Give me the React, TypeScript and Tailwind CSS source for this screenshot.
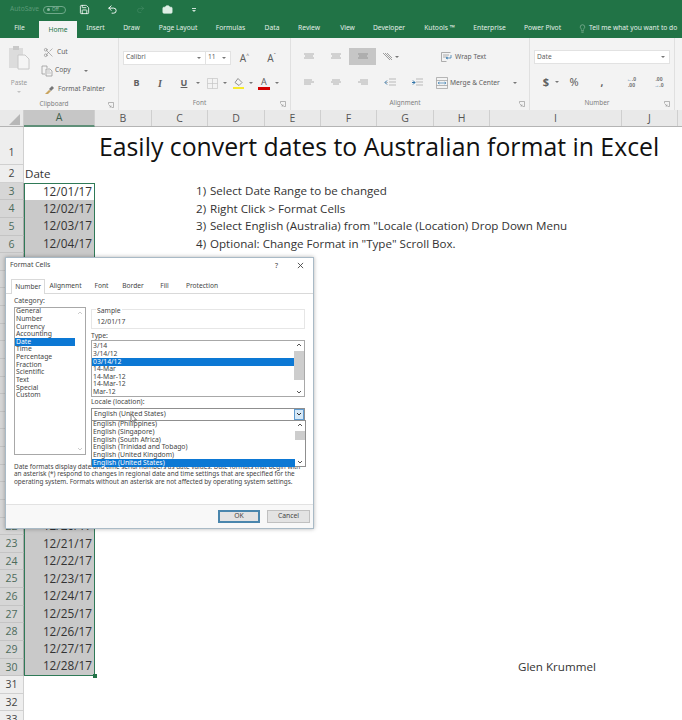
import { Camera, Lightbulb, Redo2, Save, Scissors, Undo2 } from "lucide-react";

const SANS = "font-['Open_Sans',sans-serif]";
const UI = "font-['Noto_Sans',sans-serif]";

const TABS = [
  { label: "File", w: "w-[39px]" },
  { label: "Home", w: "w-[38px]" },
  { label: "Insert", w: "w-[37px]" },
  { label: "Draw", w: "w-[35px]" },
  { label: "Page Layout", w: "w-[58px]" },
  { label: "Formulas", w: "w-[47px]" },
  { label: "Data", w: "w-[36px]" },
  { label: "Review", w: "w-[38px]" },
  { label: "View", w: "w-[39px]" },
  { label: "Developer", w: "w-[44px]" },
  { label: "Kutools ™", w: "w-[57px]" },
  { label: "Enterprise", w: "w-[43px]" },
  { label: "Power Pivot", w: "w-[63px]" },
];

const COLUMNS = [
  { label: "A", w: "w-[71px]" },
  { label: "B", w: "w-[57px]" },
  { label: "C", w: "w-[56px]" },
  { label: "D", w: "w-[57px]" },
  { label: "E", w: "w-[56px]" },
  { label: "F", w: "w-[56px]" },
  { label: "G", w: "w-[57px]" },
  { label: "H", w: "w-[56px]" },
  { label: "I", w: "w-[132px]" },
  { label: "J", w: "w-[56px]" },
];

const STEPS: Record<number, [string, string]> = {
  3: ["1)", "Select Date Range to be changed"],
  4: ["2)", "Right Click > Format Cells"],
  5: ["3)", 'Select English (Australia) from "Locale (Location) Drop Down Menu'],
  6: ["4)", 'Optional: Change Format in "Type" Scroll Box.'],
};

const CATEGORIES = ["General", "Number", "Currency", "Accounting", "Date", "Time", "Percentage", "Fraction", "Scientific", "Text", "Special", "Custom"];
const TYPES = ["3/14", "3/14/12", "03/14/12", "14-Mar", "14-Mar-12", "14-Mar-12", "Mar-12"];
const LOCALES = ["English (Philippines)", "English (Singapore)", "English (South Africa)", "English (Trinidad and Tobago)", "English (United Kingdom)", "English (United States)"];
const DIALOG_TABS = [
  { label: "Number", w: "w-[34px]" },
  { label: "Alignment", w: "w-[41px]" },
  { label: "Font", w: "w-[31px]" },
  { label: "Border", w: "w-[32px]" },
  { label: "Fill", w: "w-[31px]" },
  { label: "Protection", w: "w-[44px]" },
];

function Chev({ className = "" }: { className?: string }) {
  return <span className={`block h-0 w-0 border-x-[2px] border-t-[2px] border-x-transparent border-t-[#777] ${className}`} />;
}

function Launcher() {
  return (
    <svg width="6" height="6" viewBox="0 0 6 6" className="shrink-0">
      <path d="M.5 2.500V.5h5v5h-2M1 3l2 2M3 3.500V5H1.500" fill="none" stroke="#999" strokeWidth=".7" />
    </svg>
  );
}

function Lines({ rows, color = "#a0a0a0" }: { rows: [number, number][]; color?: string }) {
  return (
    <svg width="12" height="8" viewBox="0 0 12 8">
      {rows.map(([a, b], i) => (
        <path key={i} d={`M${a} ${1 + i * 2}H${b}`} stroke={color} strokeWidth=".8" />
      ))}
    </svg>
  );
}

function RibbonGroup({ w, label, children }: { w: string; label: string; children: React.ReactNode }) {
  return (
    <div className={`${w} flex h-full shrink-0 flex-col border-r border-[#e0e0e0]`}>
      <div className="flex-1">{children}</div>
      <div className="flex h-[13px] items-center pr-[4px]">
        <span className="flex-1 text-center text-[6.4px] leading-none text-[#808080]">{label}</span>
        <Launcher />
      </div>
    </div>
  );
}

function Slot({ w, children, className = "" }: { w: string; children?: React.ReactNode; className?: string }) {
  return <div className={`flex ${w} shrink-0 items-center justify-center ${className}`}>{children}</div>;
}

function Ribbon() {
  return (
    <div className="flex h-[72px] bg-[#f3f3f3] text-[#606060]">
      <RibbonGroup w="w-[119px]" label="Clipboard">
        <div className="flex h-full">
          <div className="flex w-[38px] flex-col items-center pt-[7px]">
            <svg width="22" height="25" viewBox="0 0 22 25">
              <rect x="1" y="3" width="14" height="20" fill="#dcdcdc" />
              <rect x="5" y="1" width="6" height="4" fill="#c9c9c9" />
              <path d="M10 10h7l4 4v10H10z" fill="#f5f5f5" stroke="#c8c8c8" />
            </svg>
            <span className="mt-[10px] text-[6.4px] leading-none text-[#999]">Paste</span>
            <Chev className="mt-[5px] opacity-40" />
          </div>
          <div className="flex flex-col pt-[5px] text-[6.7px] leading-none">
            <div className="flex h-[18px] items-center">
              <Scissors size={11} strokeWidth={1} className="ml-[5px] -scale-y-100 text-[#666]" />
              <span className="ml-[3px]">Cut</span>
            </div>
            <div className="flex h-[19px] items-center">
              <svg width="12" height="12" viewBox="0 0 12 12" className="ml-[3px]">
                <path d="M1 1h5v2M1 1v8h3M5 4h4l2 2v5H5z" fill="none" stroke="#999" strokeWidth=".8" />
                <path d="M6 6h3M6 8h4" stroke="#aaa" strokeWidth=".6" />
              </svg>
              <span className="ml-[2px]">Copy</span>
              <Chev className="ml-[13px]" />
            </div>
            <div className="flex h-[19px] items-center">
              <svg width="11" height="10" viewBox="0 0 11 10" className="ml-[6px]">
                <path d="M1 9l4-4 2 1-3 3z" fill="#c9a45e" />
                <path d="M5 4l3-3 2 2-3 3z" fill="#777" />
              </svg>
              <span className="ml-[3px]">Format Painter</span>
            </div>
          </div>
        </div>
      </RibbonGroup>

      <RibbonGroup w="w-[172px]" label="Font">
        <div className="flex h-[31px] items-center pl-[4px] pt-[8px]">
          <div className="flex h-[14px] w-[83px] items-center justify-between border border-[#e2e2e2] bg-white pl-[2px] pr-[4px] text-[6.6px] leading-none">
            Calibri <Chev />
          </div>
          <div className="flex h-[14px] w-[25px] items-center justify-between border border-l-0 border-[#e2e2e2] bg-white pl-[2px] pr-[4px] text-[6.6px] leading-none">
            11 <Chev />
          </div>
          <Slot w="w-[27px]" className="text-[10px] leading-none">A<sup className="text-[5px]">^</sup></Slot>
          <Slot w="w-[27px]" className="text-[10px] leading-none">A<sup className="text-[5px]">ˇ</sup></Slot>
        </div>
        <div className="mt-[5px] flex h-[18px] items-center pl-[8px]">
          <Slot w="w-[19px]" className="text-[9px] font-bold">B</Slot>
          <Slot w="w-[28px]" className="font-['Liberation_Serif',serif] text-[10px] font-bold italic">I</Slot>
          <Slot w="w-[20px]" className="text-[9px] font-bold underline">U</Slot>
          <Slot w="w-[8px]"><Chev /></Slot>
          <Slot w="w-[20px]">
            <svg width="11" height="11" viewBox="0 0 11 11"><path d="M.5.5h10v10H.5zM5.500.5v10M.5 5.500h10" fill="none" stroke="#c4c4c4" strokeWidth=".7" /></svg>
          </Slot>
          <Slot w="w-[6px]"><Chev /></Slot>
          <Slot w="w-[20px]" className="flex-col">
            <svg width="11" height="8" viewBox="0 0 11 8"><path d="M5 .5l4 4-3 3-4-3z" fill="#f5f5f5" stroke="#777" strokeWidth=".8" /></svg>
            <span className="mt-[1px] block h-[2px] w-[11px] bg-[#f7ea2a]" />
          </Slot>
          <Slot w="w-[6px]"><Chev /></Slot>
          <Slot w="w-[20px]" className="flex-col">
            <span className="text-[9px] leading-[9px]">A</span>
            <span className="mt-[1px] block h-[3px] w-[12px] bg-[#d40000]" />
          </Slot>
          <Slot w="w-[6px]"><Chev /></Slot>
        </div>
      </RibbonGroup>

      <RibbonGroup w="w-[239px]" label="Alignment">
        <div className="flex h-[28px] items-center pl-[5px] pt-[9px]">
          <Slot w="w-[26px]"><Lines rows={[[1, 11], [2, 10], [1, 11]]} /></Slot>
          <Slot w="w-[27px]"><Lines rows={[[1, 11], [2, 10], [1, 11]]} /></Slot>
          <Slot w="w-[27px]" className="h-[17px] bg-[#c6c6c6]"><Lines rows={[[1, 11], [2, 10], [1, 11]]} color="#8a8a8a" /></Slot>
          <Slot w="w-[28px]">
            <svg width="12" height="10" viewBox="0 0 12 10"><path d="M1 1l7 7M3 1l7 7M5 1l5 5" stroke="#888" strokeWidth=".8" /></svg>
            <Chev className="ml-[1px]" />
          </Slot>
          <div className="ml-[37px] mt-[1px] flex items-center text-[6.7px] leading-none">
            <svg width="12" height="12" viewBox="0 0 12 12"><path d="M.5 1.500h9M.5 1.500v9h5M2 4h6M2 6h4" fill="none" stroke="#999" strokeWidth=".8" /><path d="M5 7h5V4M7 6L5 7l2 1" fill="none" stroke="#3c7fb1" strokeWidth=".8" /></svg>
            <span className="ml-[2px]">Wrap Text</span>
          </div>
        </div>
        <div className="mt-[8px] flex h-[18px] items-center pl-[5px]">
          <Slot w="w-[26px]"><Lines rows={[[1, 9], [1, 11], [1, 8]]} /></Slot>
          <Slot w="w-[27px]"><Lines rows={[[2, 10], [1, 11], [3, 9]]} /></Slot>
          <Slot w="w-[27px]"><Lines rows={[[3, 11], [1, 11], [4, 11]]} /></Slot>
          <Slot w="w-[28px]">
            <svg width="12" height="10" viewBox="0 0 12 10"><path d="M5 1h7M5 4h7M5 7h7M1 4.500h3" stroke="#aaa" strokeWidth=".8" /><path d="M3 2.500L1 4.500l2 2" fill="none" stroke="#2f73a8" /></svg>
          </Slot>
          <Slot w="w-[26px]">
            <svg width="12" height="10" viewBox="0 0 12 10"><path d="M5 1h7M5 4h7M5 7h7" stroke="#aaa" strokeWidth=".8" /><path d="M1 4.500h3M2 2.500l2 2-2 2" fill="none" stroke="#2f73a8" /></svg>
          </Slot>
          <div className="ml-[6px] flex items-center text-[6.7px] leading-none">
            <svg width="12" height="12" viewBox="0 0 12 12"><path d="M.5.5h11v11H.5zM.5 3.500h11M.5 8.500h11" fill="none" stroke="#999" strokeWidth=".7" /><path d="M2 6h8M3.500 5L2 6l1.500 1M8.500 5L10 6 8.500 7" fill="none" stroke="#3c7fb1" strokeWidth=".7" /></svg>
            <span className="ml-[2px]">Merge &amp; Center</span>
            <Chev className="ml-[13px]" />
          </div>
        </div>
      </RibbonGroup>

      <RibbonGroup w="w-[145px]" label="Number">
        <div className="pl-[4px] pt-[12px]">
          <div className="flex h-[14px] w-[136px] items-center justify-between border border-[#e2e2e2] bg-white pl-[2px] pr-[4px] text-[6.6px] leading-none">
            Date <Chev />
          </div>
        </div>
        <div className="mt-[9px] flex h-[18px] items-center pl-[11px]">
          <Slot w="w-[10px]" className="text-[11px] font-bold">$</Slot>
          <Slot w="w-[11px]"><Chev /></Slot>
          <Slot w="w-[24px]" className="text-[11px]">%</Slot>
          <Slot w="w-[32px]" className="text-[10px] font-bold">,</Slot>
          <Slot w="w-[27px]" className="flex-col text-[5px] font-bold leading-[6px] text-[#777]">
            <span><span className="text-[#2f73a8]">←</span>.0</span>
            <span>.00</span>
          </Slot>
          <Slot w="w-[28px]" className="flex-col text-[5px] font-bold leading-[6px] text-[#777]">
            <span>.00</span>
            <span><span className="text-[#2f73a8]">→</span>.0</span>
          </Slot>
        </div>
      </RibbonGroup>
    </div>
  );
}

function TopBar() {
  return (
    <div className="bg-[#217346] text-[#e4efe8]">
      <div className="flex h-[19px] items-center pl-[10px]">
        <span className="w-[33px] text-[6.6px] leading-none text-[#5b9a78]">AutoSave</span>
        <span className="flex h-[8px] w-[23px] items-center gap-[2px] rounded-full border border-[#6fa98a] pl-[3px] text-[4.5px] leading-none text-[#8dbca3]">
          <span className="h-[3px] w-[3px] rounded-full bg-[#8dbca3]" />Off
        </span>
        <Slot w="w-[36px]"><Save size={11} strokeWidth={1.8} className="text-white" /></Slot>
        <Slot w="w-[20px]"><Undo2 size={11} strokeWidth={2} className="text-white" /></Slot>
        <Slot w="w-[36px]"><Redo2 size={9} strokeWidth={1} className="text-[#5b9a78]" /></Slot>
        <Slot w="w-[18px]"><Camera size={11} strokeWidth={1.6} className="fill-[#dfeee6] text-[#dfeee6]" /></Slot>
        <Slot w="w-[36px]">
          <span className="flex flex-col items-center gap-[1px]">
            <span className="block h-[1px] w-[4px] bg-[#cfe3d8]" />
            <Chev className="border-t-[#cfe3d8]" />
          </span>
        </Slot>
      </div>
      <div className={`flex h-[19px] items-end text-[6.7px] leading-none ${UI}`}>
        {TABS.map((t) =>
          t.label === "Home" ? (
            <div key={t.label} className={`${t.w} flex h-[17px] shrink-0 items-center justify-center bg-[#f3f3f3] pt-[2px] text-[#217346]`}>
              {t.label}
            </div>
          ) : (
            <div key={t.label} className={`${t.w} flex h-[19px] shrink-0 items-center justify-center`}>
              {t.label}
            </div>
          ),
        )}
        <div className="flex h-[19px] items-center whitespace-nowrap pl-[4px]">
          <Lightbulb size={9} strokeWidth={1} />
          <span className="ml-[2px]">Tell me what you want to do</span>
        </div>
      </div>
    </div>
  );
}

function ColumnHeader() {
  return (
    <div className={`flex h-[17px] border-b border-[#b4b4b4] bg-[#e9e9e9] text-[10.5px] leading-none text-[#555] ${SANS}`}>
      <div className="flex w-[24px] shrink-0 items-end justify-end border-r border-[#cfcfcf] pb-[1px] pr-[3px]">
        <span className="h-0 w-0 border-b-[11px] border-l-[11px] border-b-[#b7b7b7] border-l-transparent" />
      </div>
      {COLUMNS.map((c, i) => (
        <div
          key={c.label}
          className={`${c.w} flex shrink-0 items-center justify-center border-r border-[#cfcfcf] ${i === 0 ? "-mb-px border-b-2 border-b-[#5f8f78] bg-[#c6c6c6] text-[#3f5f4e]" : ""}`}
        >
          {c.label}
        </div>
      ))}
    </div>
  );
}

function DateRow({ row }: { row: number }) {
  const step = STEPS[row];
  const first = row === 3;
  const last = row === 30;
  const date = `12/${String(row - 2).padStart(2, "0")}/17`;
  return (
    <div className="flex h-[17.63px]">
      <div className="flex w-[24px] shrink-0 items-center justify-center border-b border-[#c4c4c4] border-r border-r-[#a9a9a9] bg-[#d6d6d6] text-[10.5px] leading-none text-[#4d6b5b]">
        {row}
      </div>
      <div
        className={`relative flex w-[71px] shrink-0 items-center justify-end border-x border-[#2f7a57] pb-[1px] pr-[2px] text-[11.8px] text-[#333] ${first ? "border-t bg-white" : "bg-[#c9c9c9]"} ${last ? "border-b" : ""}`}
      >
        {date}
        {last && <span className="absolute -bottom-[3px] -right-[3px] h-[4px] w-[4px] bg-[#217346]" />}
      </div>
      {step && (
        <div className="flex items-center whitespace-nowrap pb-[1px] pl-[101px] text-[#333]">
          <span className="w-[14px]">{step[0]}</span>
          <span>{step[1]}</span>
        </div>
      )}
      {row === 30 && <div className="flex items-center pb-[1px] pl-[423px] text-[#333]">Glen Krummel</div>}
    </div>
  );
}

function Sheet() {
  const rows = Array.from({ length: 28 }, (_, i) => i + 3);
  const Header = ({ n, h = "h-[17.63px]", end = false }: { n: number; h?: string; end?: boolean }) => (
    <div className={`flex ${h} w-[24px] shrink-0 justify-center border-b border-r border-[#d0d0d0] bg-[#eeeeee] text-[10.5px] leading-none text-[#444] ${end ? "items-end pb-[7px]" : "items-center"}`}>
      {n}
    </div>
  );
  return (
    <div className={`text-[11.6px] leading-none ${SANS}`}>
      <div className="flex">
        <Header n={1} h="h-[38px]" end />
        <div className="flex items-center whitespace-nowrap pl-[75px] text-[24.8px] leading-none text-[#111]">
          Easily convert dates to Australian format in Excel
        </div>
      </div>
      <div className="flex">
        <Header n={2} />
        <div className="flex items-center pl-[1px] text-[11.6px] text-[#333]">Date</div>
      </div>
      {rows.map((r) => (
        <DateRow key={r} row={r} />
      ))}
      <div className="flex"><Header n={31} /></div>
      <div className="flex"><Header n={32} /></div>
      <div className="flex"><Header n={33} /></div>
    </div>
  );
}

function ScrollTrack({ thumb }: { thumb: string }) {
  return (
    <div className="flex w-[10px] shrink-0 flex-col items-center justify-between py-[2px]">
      <svg width="6" height="4" viewBox="0 0 6 4"><path d="M1 3l2-2 2 2" fill="none" stroke="#555" /></svg>
      <span className={`w-full flex-1 ${thumb}`} />
      <svg width="6" height="4" viewBox="0 0 6 4"><path d="M1 1l2 2 2-2" fill="none" stroke="#555" /></svg>
    </div>
  );
}

function FormatCells() {
  return (
    <div className={`absolute left-[5px] top-[257px] flex h-[272px] w-[309px] flex-col border border-[#a9bac6] bg-white text-[6.8px] leading-none text-[#444] shadow-[0_0_4px_rgba(0,0,0,0.3)] ${UI}`}>
      <div className="flex h-[21px] shrink-0 items-center pb-[6px] pl-[4px] pr-[9px] text-[6.9px]">
        <span className="flex-1">Format Cells</span>
        <span className="mr-[19px] text-[7px]">?</span>
        <svg width="7" height="7" viewBox="0 0 8 8"><path d="M1 1l6 6M7 1L1 7" stroke="#444" /></svg>
      </div>

      <div className="flex h-[15px] items-end border-b border-[#d9d9d9] pl-[5px]">
        {DIALOG_TABS.map((t, i) => (
          <div
            key={t.label}
            className={`${t.w} flex h-[14px] items-center justify-center text-[6.6px] ${i === 0 ? "-mb-px h-[15px] border border-b-0 border-[#d9d9d9] bg-white" : ""}`}
          >
            {t.label}
          </div>
        ))}
      </div>

      <div className="relative flex flex-1 flex-col pl-[8px] pr-[8px]">
        <div className="flex gap-[5px]">
          <div className="w-[72px] shrink-0">
            <div className="pt-[4px]">Category:</div>
            <div className="mt-[2px] flex h-[148px] border border-[#a8a8a8]">
              <div className="flex-1">
                {CATEGORIES.map((c) => (
                  <div key={c} className={`flex h-[7.65px] items-center pl-[1px] ${c === "Date" ? "bg-[#0c78d4] text-white" : ""}`}>
                    {c}
                  </div>
                ))}
              </div>
              <div className="flex w-[10px] flex-col items-center justify-between py-[3px]">
                <svg width="6" height="4" viewBox="0 0 6 4"><path d="M1 3l2-2 2 2" fill="none" stroke="#ccc" /></svg>
                <svg width="6" height="4" viewBox="0 0 6 4"><path d="M1 1l2 2 2-2" fill="none" stroke="#ccc" /></svg>
              </div>
            </div>
          </div>

          <div className="w-[215px]">
            <div className="relative mt-[15px] h-[20px] border border-[#e6e6e6]">
              <span className="absolute -top-[2px] left-[4px] bg-white px-[1px]">Sample</span>
              <span className="absolute left-[5px] top-[9px]">12/01/17</span>
            </div>
            <div className="mt-[4px]">Type:</div>
            <div className="flex h-[57px] border border-[#a8a8a8]">
              <div className="flex-1 pt-[2px]">
                {TYPES.map((t, i) => (
                  <div key={i} className={`flex h-[7.65px] items-center pl-[1px] ${i === 2 ? "bg-[#0c78d4] text-white" : ""}`}>
                    {t}
                  </div>
                ))}
              </div>
              <ScrollTrack thumb="my-[4px] mb-[10px] bg-[#cdcdcd]" />
            </div>
            <div className="mt-[2px]">Locale (location):</div>
            <div className="mt-[2px] flex h-[13px] items-center border border-[#8f8f8f] pl-[2px]">
              <span className="flex-1">English (United States)</span>
              <span className="flex h-full w-[10px] items-center justify-center border border-[#5f9bd0] bg-[#d5e8f7]">
                <svg width="6" height="4" viewBox="0 0 6 4"><path d="M1 1l2 2 2-2" fill="none" stroke="#333" /></svg>
              </span>
            </div>
          </div>
        </div>

        <div className="mt-[8px] w-[292px] text-[6.4px] leading-[7.6px]">
          Date formats display date and time serial numbers as date values. Date formats that begin with an asterisk (*) respond to changes in regional date and time settings that are specified for the operating system. Formats without an asterisk are not affected by operating system settings.
        </div>

        <div className="absolute left-[85px] top-[126px] flex h-[47px] w-[215px] border border-[#8f8f8f] bg-white">
          <div className="flex-1">
            {LOCALES.map((l, i) => (
              <div key={l} className={`flex h-[7.65px] items-center pl-[1px] ${i === 5 ? "bg-[#0c78d4] text-white" : ""}`}>
                {l}
              </div>
            ))}
          </div>
          <ScrollTrack thumb="my-[4px] mb-[20px] bg-[#cdcdcd]" />
        </div>
      </div>

      <div className="flex h-[24px] shrink-0 items-center justify-end gap-[7px] border-t border-[#e2e2e2] bg-[#f8f8f8] pr-[3px]">
        <span className="flex h-[13px] w-[42px] items-center justify-center border-2 border-[#4a86ad] bg-[#e3e3e3]">OK</span>
        <span className="flex h-[13px] w-[43px] items-center justify-center border border-[#c0c0c0] bg-[#e3e3e3]">Cancel</span>
      </div>

      <svg width="7" height="11" viewBox="0 0 7 11" className="absolute left-[124px] top-[155px]">
        <path d="M1 1v8l2-2 1.500 3 1-.5L4 7h2.500z" fill="#fff" stroke="#555" strokeWidth=".7" />
      </svg>
    </div>
  );
}

export default function App() {
  return (
    <div className={`relative h-[720px] w-[682px] overflow-hidden bg-white ${UI}`}>
      <TopBar />
      <Ribbon />
      <ColumnHeader />
      <Sheet />
      <FormatCells />
    </div>
  );
}
